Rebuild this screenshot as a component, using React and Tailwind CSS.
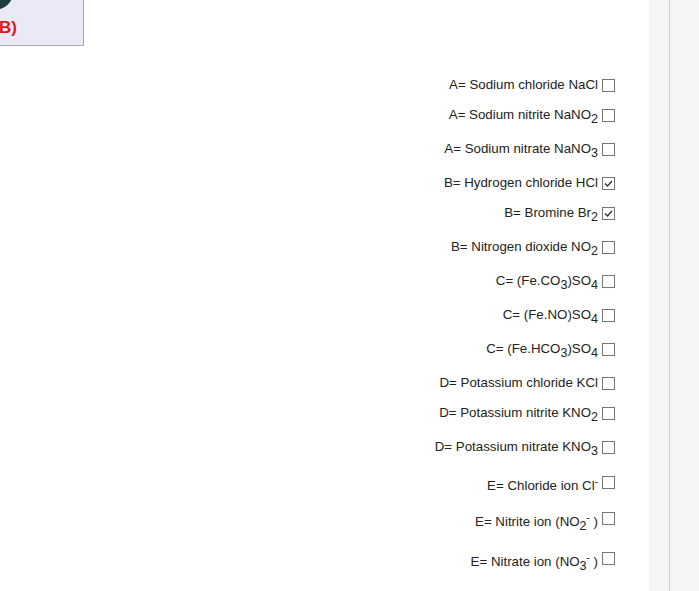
import React from "react";

const Sub = ({ children }) => (
  <span className="relative top-[4px] text-[12.5px] leading-none">{children}</span>
);

const Sup = ({ children }) => (
  <span className="relative -top-[5px] text-[10px] leading-none">{children}</span>
);

const Box = ({ checked, raised }) => (
  <span
    className={
      "ml-[4px] inline-flex h-[13px] w-[13px] shrink-0 items-center justify-center border border-[#767676] bg-white" +
      (raised ? " -translate-y-[4px]" : "")
    }
  >
    {checked && (
      <svg width="11" height="11" viewBox="0 0 11 11" fill="none">
        <path d="M2 5.5 L4.5 8 L9 3" stroke="#333" strokeWidth="1.4" />
      </svg>
    )}
  </span>
);

const rows = [
  { mt: "mt-[29px]", label: <>A= Sodium chloride NaCl</> },
  { mt: "mt-[10px]", label: <>A= Sodium nitrite NaNO<Sub>2</Sub></> },
  { mt: "mt-[14px]", label: <>A= Sodium nitrate NaNO<Sub>3</Sub></> },
  { mt: "mt-[14px]", label: <>B= Hydrogen chloride HCl</>, checked: true },
  { mt: "mt-[10px]", label: <>B= Bromine Br<Sub>2</Sub></>, checked: true },
  { mt: "mt-[14px]", label: <>B= Nitrogen dioxide NO<Sub>2</Sub></> },
  { mt: "mt-[14px]", label: <>C= (Fe.CO<Sub>3</Sub>)SO<Sub>4</Sub></> },
  { mt: "mt-[14px]", label: <>C= (Fe.NO)SO<Sub>4</Sub></> },
  { mt: "mt-[14px]", label: <>C= (Fe.HCO<Sub>3</Sub>)SO<Sub>4</Sub></> },
  { mt: "mt-[14px]", label: <>D= Potassium chloride KCl</> },
  { mt: "mt-[10px]", label: <>D= Potassium nitrite KNO<Sub>2</Sub></> },
  { mt: "mt-[14px]", label: <>D= Potassium nitrate KNO<Sub>3</Sub></> },
  { mt: "mt-[19px]", label: <>E= Chloride ion Cl<Sup>-</Sup></>, raised: true },
  { mt: "mt-[16px]", label: <>E= Nitrite ion (NO<Sub>2</Sub><Sup>-</Sup> )</>, raised: true },
  { mt: "mt-[20px]", label: <>E= Nitrate ion (NO<Sub>3</Sub><Sup>-</Sup> )</>, raised: true },
];

export default function App() {
  return (
    <div
      className="flex h-[591px] w-[699px] overflow-hidden bg-white text-[#222]"
      style={{ fontFamily: '"Liberation Sans", Arial, sans-serif' }}
    >
      <div className="flex w-[649px] flex-col">
        {/* cropped question image */}
        <div className="relative h-[46px] w-[84px] overflow-hidden border-b border-r border-[#a9a9b3] bg-[#e9eaf6]">
          <div className="absolute -left-[26px] -top-[30px] h-[40px] w-[40px] rounded-full bg-[#1f3c40]" />
          <span className="absolute left-[-1px] top-[15px] text-[17px] font-bold text-[#e4141b]">B)</span>
        </div>

        <div className="flex flex-col items-end pr-[34px]">
          {rows.map((r, i) => (
            <div key={i} className={"flex h-[20px] items-center " + r.mt}>
              <span className="whitespace-pre text-[13.3px] leading-none">{r.label}</span>
              <Box checked={r.checked} raised={r.raised} />
            </div>
          ))}
        </div>
      </div>

      <div className="flex w-[50px]">
        <div className="w-[20px] bg-[#f5f5f5]" />
        <div className="w-px bg-[#cfcfcf]" />
        <div className="flex-1 bg-[#f6f6f6]" />
      </div>
    </div>
  );
}
